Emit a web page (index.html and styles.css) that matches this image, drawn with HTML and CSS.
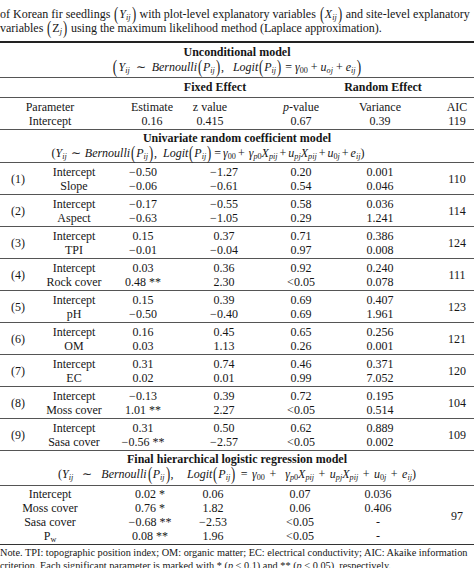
FILE: index.html
```html
<!DOCTYPE html>
<html>
<head>
<meta charset="utf-8">
<link rel="stylesheet" href="styles.css">
</head>
<body>
<div class="page">
<p class="caption">of Korean fir seedlings <span class="bp">(</span><i>Y</i><sub><i>ij</i></sub><span class="bp">)</span> with plot-level explanatory variables <span class="bp">(</span><i>X</i><sub><i>ij</i></sub><span class="bp">)</span> and site-level explanatory<br>variables <span class="bp">(</span>Z<sub><i>j</i></sub><span class="bp">)</span> using the maximum likelihood method (Laplace approximation).</p>
<table class="tbl">
<colgroup>
<col class="c0"><col class="c1"><col class="c2"><col class="c3"><col class="c4"><col class="c5"><col class="c6">
</colgroup>
<tbody class="sec">
<tr><td colspan="7" class="ttl t1">Unconditional model</td></tr>
<tr><td colspan="7" class="fml f1"><span class="bp big">(</span><i>Y</i><sub><i>ij</i></sub> &nbsp;∼&nbsp; <i>Bernoulli</i><span class="bp">(</span><i>P</i><sub><i>ij</i></sub><span class="bp">)</span>, &nbsp;&nbsp;<i>Logit</i><span class="bp">(</span><i>P</i><sub><i>ij</i></sub><span class="bp">)</span> = <i>γ</i><sub>00</sub> + <i>u</i><sub><i>oj</i></sub> + <i>e</i><sub><i>ij</i></sub><span class="bp big">)</span></td></tr>
</tbody>
<tbody class="sec">
<tr class="hdr"><td colspan="2"></td><td colspan="3" class="b fe">Fixed Effect</td><td class="b re">Random Effect</td><td></td></tr>
</tbody>
<tbody class="sec">
<tr class="r1"><td colspan="2" class="pl">Parameter</td><td class="est">Estimate</td><td class="zv">z value</td><td><i>p</i>-value</td><td>Variance</td><td class="aic">AIC</td></tr>
<tr class="r2"><td colspan="2" class="pl">Intercept</td><td class="est">0.16</td><td class="zv">0.415</td><td>0.67</td><td>0.39</td><td class="aic">119</td></tr>
</tbody>
<tbody class="sec">
<tr><td colspan="7" class="ttl t2">Univariate random coefficient model</td></tr>
<tr><td colspan="7" class="fml f2">(<i>Y</i><sub><i>ij</i></sub> &nbsp;∼&nbsp; <i>Bernoulli</i><span class="bp">(</span><i>P</i><sub><i>ij</i></sub><span class="bp">)</span>, &nbsp;&nbsp;<i>Logit</i><span class="bp">(</span><i>P</i><sub><i>ij</i></sub><span class="bp">)</span> = <i>γ</i><sub>00</sub> + &nbsp;<i>γ</i><sub><i>p</i>0</sub><i>X</i><sub><i>pij</i></sub> + <i>u</i><sub><i>pj</i></sub><i>X</i><sub><i>pij</i></sub> + <i>u</i><sub>0<i>j</i></sub> + <i>e</i><sub><i>ij</i></sub>)</td></tr>
</tbody>
<tbody class="grp">
<tr class="r1"><td rowspan="2">(1)</td><td>Intercept</td><td>−0.50</td><td>−1.27</td><td>0.20</td><td>0.001</td><td rowspan="2" class="aic">110</td></tr>
<tr class="r2"><td>Slope</td><td>−0.06</td><td>−0.61</td><td>0.54</td><td>0.046</td></tr>
</tbody>
<tbody class="grp">
<tr class="r1"><td rowspan="2">(2)</td><td>Intercept</td><td>−0.17</td><td>−0.55</td><td>0.58</td><td>0.036</td><td rowspan="2" class="aic">114</td></tr>
<tr class="r2"><td>Aspect</td><td>−0.63</td><td>−1.05</td><td>0.29</td><td>1.241</td></tr>
</tbody>
<tbody class="grp">
<tr class="r1"><td rowspan="2">(3)</td><td>Intercept</td><td>0.15</td><td>0.37</td><td>0.71</td><td>0.386</td><td rowspan="2" class="aic">124</td></tr>
<tr class="r2"><td>TPI</td><td>−0.01</td><td>−0.04</td><td>0.97</td><td>0.008</td></tr>
</tbody>
<tbody class="grp">
<tr class="r1"><td rowspan="2">(4)</td><td>Intercept</td><td>0.03</td><td>0.36</td><td>0.92</td><td>0.240</td><td rowspan="2" class="aic">111</td></tr>
<tr class="r2"><td>Rock cover</td><td>0.48 **</td><td>2.30</td><td>&lt;0.05</td><td>0.078</td></tr>
</tbody>
<tbody class="grp">
<tr class="r1"><td rowspan="2">(5)</td><td>Intercept</td><td>0.15</td><td>0.39</td><td>0.69</td><td>0.407</td><td rowspan="2" class="aic">123</td></tr>
<tr class="r2"><td>pH</td><td>−0.50</td><td>−0.40</td><td>0.69</td><td>1.961</td></tr>
</tbody>
<tbody class="grp">
<tr class="r1"><td rowspan="2">(6)</td><td>Intercept</td><td>0.16</td><td>0.45</td><td>0.65</td><td>0.256</td><td rowspan="2" class="aic">121</td></tr>
<tr class="r2"><td>OM</td><td>0.03</td><td>1.13</td><td>0.26</td><td>0.001</td></tr>
</tbody>
<tbody class="grp">
<tr class="r1"><td rowspan="2">(7)</td><td>Intercept</td><td>0.31</td><td>0.74</td><td>0.46</td><td>0.371</td><td rowspan="2" class="aic">120</td></tr>
<tr class="r2"><td>EC</td><td>0.02</td><td>0.01</td><td>0.99</td><td>7.052</td></tr>
</tbody>
<tbody class="grp">
<tr class="r1"><td rowspan="2">(8)</td><td>Intercept</td><td>−0.13</td><td>0.39</td><td>0.72</td><td>0.195</td><td rowspan="2" class="aic">104</td></tr>
<tr class="r2"><td>Moss cover</td><td>1.01 **</td><td>2.27</td><td>&lt;0.05</td><td>0.514</td></tr>
</tbody>
<tbody class="grp">
<tr class="r1"><td rowspan="2">(9)</td><td>Intercept</td><td>0.31</td><td>0.50</td><td>0.62</td><td>0.889</td><td rowspan="2" class="aic">109</td></tr>
<tr class="r2"><td>Sasa cover</td><td>−0.56 **</td><td>−2.57</td><td>&lt;0.05</td><td>0.002</td></tr>
</tbody>
<tbody class="sec">
<tr><td colspan="7" class="ttl t3">Final hierarchical logistic regression model</td></tr>
<tr><td colspan="7" class="fml f3">(<i>Y</i><sub><i>ij</i></sub> &nbsp;∼&nbsp; <i>Bernoulli</i><span class="bp">(</span><i>P</i><sub><i>ij</i></sub><span class="bp">)</span>, &nbsp;&nbsp;<i>Logit</i><span class="bp">(</span><i>P</i><sub><i>ij</i></sub><span class="bp">)</span> = <i>γ</i><sub>00</sub> + &nbsp;<i>γ</i><sub><i>p</i>0</sub><i>X</i><sub><i>pij</i></sub> + <i>u</i><sub><i>pj</i></sub><i>X</i><sub><i>pij</i></sub> + <i>u</i><sub>0<i>j</i></sub> + <i>e</i><sub><i>ij</i></sub>)</td></tr>
</tbody>
<tbody class="last">
<tr class="f1r"><td colspan="2" class="pl">Intercept</td><td class="fest">0.02 *</td><td class="fz">0.06</td><td class="fp">0.07</td><td class="fv">0.036</td><td rowspan="4" class="aic">97</td></tr>
<tr><td colspan="2" class="pl">Moss cover</td><td class="fest">0.76 *</td><td class="fz">1.82</td><td class="fp">0.06</td><td class="fv">0.406</td></tr>
<tr><td colspan="2" class="pl">Sasa cover</td><td class="fest">−0.68 **</td><td class="fz">−2.53</td><td class="fp">&lt;0.05</td><td class="fv">-</td></tr>
<tr class="f4r"><td colspan="2" class="pl">P<sub>w</sub></td><td class="fest">0.08 **</td><td class="fz">1.96</td><td class="fp">&lt;0.05</td><td class="fv">-</td></tr>
</tbody>
</table>
<p class="note">Note. TPI: topographic position index; OM: organic matter; EC: electrical conductivity; AIC: Akaike information<br>criterion. Each significant parameter is marked with * (<i>p</i> &lt; 0.1) and ** (<i>p</i> &lt; 0.05), respectively.</p>
</div>
</body>
</html>
```
FILE: styles.css
```css
html, body {
  margin: 0;
  padding: 0;
  background: #ffffff;
}
body {
  color: #161616;
  font-family: "Liberation Serif", "Times New Roman", serif;
  font-size: 12px;
}
.page {
  width: 474px;
  height: 568px;
  overflow: hidden;
  padding-top: 7px;
  box-sizing: border-box;
}
sub {
  font-size: 0.68em;
  vertical-align: -0.3em;
  line-height: 0;
}
.bp {
  display: inline-block;
  transform: scale(1.05, 1.5);
  margin: 0 1px;
  font-style: normal;
}
.bp.big {
  transform: scale(1.1, 1.55);
}
.caption {
  margin: 0;
  font-size: 12px;
  line-height: 14px;
  white-space: nowrap;
}
.tbl {
  width: 474px;
  margin-top: 6px;
  border-collapse: collapse;
  table-layout: fixed;
  border-top: 2px solid #222222;
}
.c0 { width: 36px; }
.c1 { width: 76px; }
.c2 { width: 62px; }
.c3 { width: 100px; }
.c4 { width: 54px; }
.c5 { width: 104px; }
.c6 { width: 42px; }
.tbl td {
  padding: 0;
  text-align: center;
  line-height: 14px;
  white-space: nowrap;
}
.sec, .grp {
  border-bottom: 1px solid #555555;
}
.last {
  border-bottom: 1px solid #333333;
}
.ttl {
  font-weight: bold;
}
.tbl td.t1 { padding-top: 2px; }
.tbl td.t2 { padding-top: 1px; }
.tbl td.t3 { padding-top: 1px; }
.tbl td.fml {
  line-height: 16px;
}
.tbl td.f1 { padding-bottom: 2px; }
.tbl td.f2 { padding-bottom: 1px; padding-right: 58px; word-spacing: -1px; }
.tbl td.f3 { padding-bottom: 3px; word-spacing: 1.5px; }
.b { font-weight: bold; }
.tbl .hdr td { padding-top: 2px; padding-bottom: 3px; }
.tbl td.fe { padding-right: 10px; }
.tbl td.re { padding-left: 6px; }
.tbl td.pl { padding-right: 12px; }
.tbl td.est { padding-left: 18px; }
.tbl td.zv { padding-right: 28px; }
.tbl td.aic { padding-left: 8px; }
.tbl .r1 td { padding-top: 2px; }
.tbl .r2 td { padding-bottom: 1px; }
.tbl .r1 td[rowspan] { padding-top: 0; }
.tbl td.fest { padding-left: 14px; }
.tbl td.fz { padding-right: 22px; }
.tbl td.fp { padding-right: 2px; }
.tbl td.fv { padding-right: 4px; }
.tbl .f1r td { padding-top: 1px; }
.tbl .f4r td { padding-bottom: 1px; }
.note {
  margin: 1px 0 0 0;
  font-size: 10.3px;
  line-height: 13px;
  white-space: nowrap;
}
```
